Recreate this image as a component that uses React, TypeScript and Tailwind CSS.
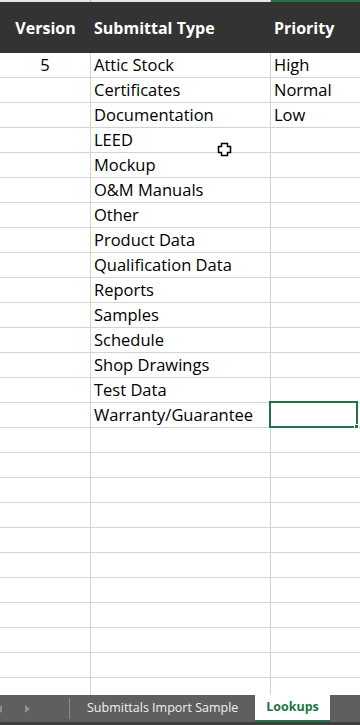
const types = [
  "Attic Stock",
  "Certificates",
  "Documentation",
  "LEED",
  "Mockup",
  "O&M Manuals",
  "Other",
  "Product Data",
  "Qualification Data",
  "Reports",
  "Samples",
  "Schedule",
  "Shop Drawings",
  "Test Data",
  "Warranty/Guarantee",
];

const priorities = ["High", "Normal", "Low"];

const rows = Array.from({ length: 26 }, (_, i) => i);

function CellCursor() {
  return (
    <svg
      className="pointer-events-none absolute left-[217px] top-[142px]"
      width="15"
      height="15"
      viewBox="0 0 15 15"
    >
      <path
        d="M4.5 1.5h6v3h3v6h-3v3h-6v-3h-3v-6h3z"
        fill="white"
        stroke="black"
        strokeWidth="1.5"
      />
    </svg>
  );
}

export default function App() {
  return (
    <div
      className="relative flex h-[725px] w-[360px] flex-col overflow-hidden bg-white"
      style={{ fontFamily: '"Open Sans", "Liberation Sans", sans-serif' }}
    >
      <div className="flex h-[2px] shrink-0 bg-[#e6e6e6]">
        <div className="w-[91px] border-r border-[#bdbdbd]" />
        <div className="w-[180px] border-r border-[#bdbdbd]" />
        <div className="flex-1 bg-[#217346]" />
      </div>

      <div className="flex h-[51px] shrink-0 items-center bg-[#333333] text-[16px] font-bold text-white">
        <div className="w-[91px] text-center">Version</div>
        <div className="w-[180px] pl-[3px]">Submittal Type</div>
        <div className="flex-1 pl-[3px]">Priority</div>
      </div>

      <div className="relative flex-1 overflow-hidden">
        {rows.map((i) => (
          <div
            key={i}
            className="flex h-[25px] items-center border-b border-[#d4d4d4] text-[16.5px] leading-none text-black"
          >
            <div className="flex h-full w-[91px] items-center justify-center border-r border-[#d4d4d4]">
              {i === 0 ? "5" : ""}
            </div>
            <div className="flex h-full w-[180px] items-center border-r border-[#d4d4d4] pl-[3px]">
              {types[i] ?? ""}
            </div>
            <div className="flex h-full flex-1 items-center pl-[3px]">
              {priorities[i] ?? ""}
            </div>
          </div>
        ))}
        <div className="absolute left-[269px] top-[348px] h-[27px] w-[89px] border-2 border-[#217346]">
          <div className="absolute -bottom-[3px] -right-[3px] h-[5px] w-[5px] border border-white bg-[#217346]" />
        </div>
      </div>

      <div className="flex h-[27px] shrink-0 items-stretch bg-[#5f5f5f] text-[12.5px]">
        <div className="my-[3px] flex w-[70px] items-center gap-[19px] border-r border-[#8a8a8a]">
          <span className="ml-[-3px] h-0 w-0 border-y-[4px] border-r-[5px] border-y-transparent border-r-[#8f8f8f]" />
          <span className="ml-[4px] h-0 w-0 border-y-[4px] border-l-[5px] border-y-transparent border-l-[#8f8f8f]" />
        </div>
        <div className="flex w-[185px] items-center pl-[17px] text-[#f0f0f0]">
          Submittals Import Sample
        </div>
        <div className="flex w-[75px] items-center justify-center border-b-2 border-[#217346] bg-white font-bold text-[#217346]">
          Lookups
        </div>
      </div>
      <div className="h-[3px] shrink-0 bg-[#404040]" />

      <CellCursor />
    </div>
  );
}
